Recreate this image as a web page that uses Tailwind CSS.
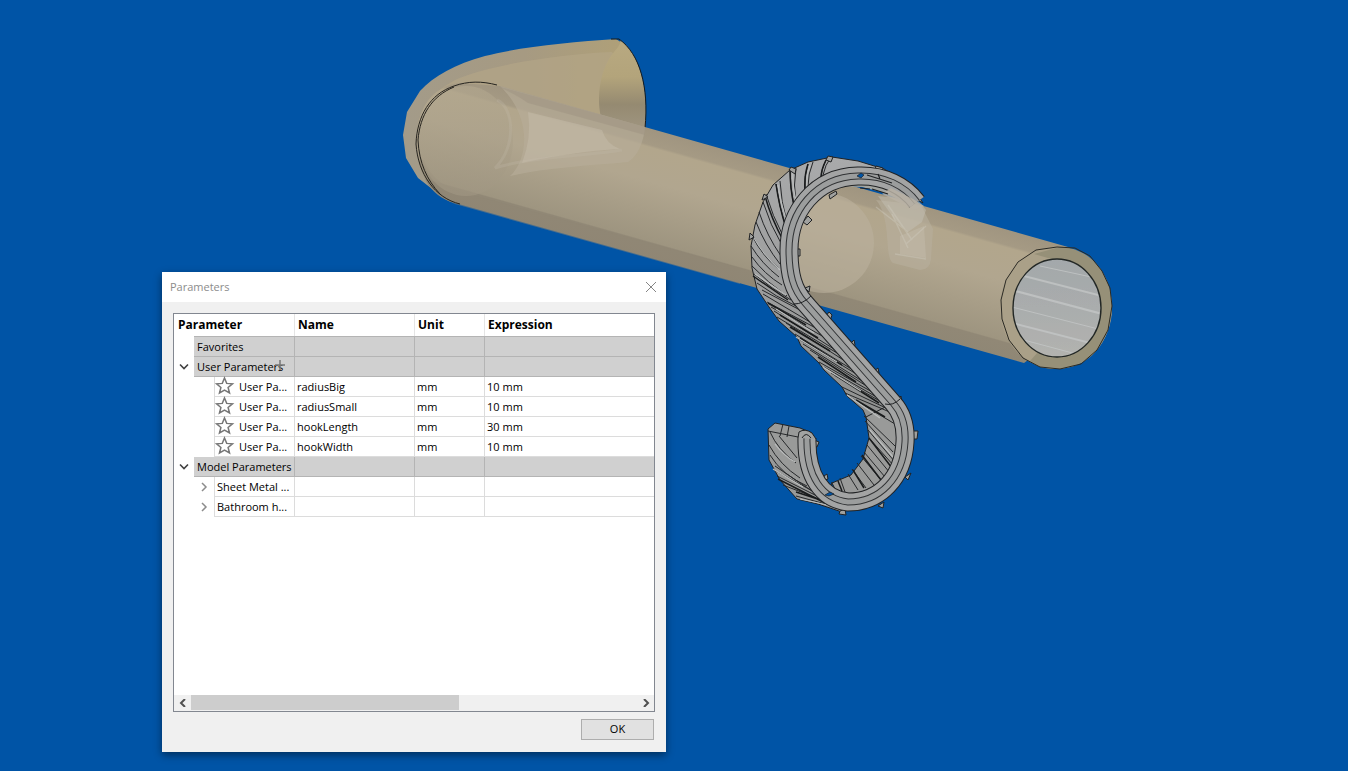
<!DOCTYPE html>
<html lang="en">
<head>
<meta charset="utf-8">
<meta name="viewport" content="width=device-width, initial-scale=1">
<title>Parameters</title>
<script src="https://cdn.jsdelivr.net/npm/@tailwindcss/browser@4"></script>
</head>
<body class="bg-[#0054a6] text-black">
<main class="relative min-h-screen overflow-hidden font-['Open_Sans','Noto_Sans',sans-serif] text-[11px]">
  <!-- 3D viewport: bathroom rail with a ribbed S hook -->
  <svg class="absolute inset-0 h-full w-full" viewBox="0 0 1348 771" preserveAspectRatio="xMinYMin meet" role="img" aria-label="Hook on a rail">
    <defs>
      <linearGradient id="tube" gradientUnits="userSpaceOnUse" x1="760" y1="160" x2="726" y2="281">
        <stop offset="0" stop-color="#a09580"/><stop offset=".12" stop-color="#a59a84"/><stop offset=".14" stop-color="#b2a68c"/><stop offset=".4" stop-color="#b1a68f"/><stop offset=".86" stop-color="#9e9580"/><stop offset=".87" stop-color="#918876"/><stop offset="1" stop-color="#8f8775"/>
      </linearGradient>
      <linearGradient id="elbow" x1="0" y1="0" x2="1" y2="0">
        <stop offset="0" stop-color="#a39b89"/><stop offset=".5" stop-color="#a69a82"/><stop offset="1" stop-color="#b1a176"/>
      </linearGradient>
      <linearGradient id="mouth" x1="0" y1="0" x2="0" y2="1">
        <stop offset="0" stop-color="#b8a981"/><stop offset=".4" stop-color="#b3a47b"/><stop offset=".7" stop-color="#958a71"/><stop offset="1" stop-color="#a09681"/>
      </linearGradient>
      <linearGradient id="bore" x1="0" y1="0" x2="0" y2="1">
        <stop offset="0" stop-color="#a3a8ab"/><stop offset=".5" stop-color="#aaadad"/><stop offset="1" stop-color="#b3b3af"/>
      </linearGradient>
      <linearGradient id="disc" x1="0" y1="0" x2="0" y2="1">
        <stop offset="0" stop-color="#b3a88f"/><stop offset="1" stop-color="#a19783"/>
      </linearGradient>
      <linearGradient id="steel" x1="0" y1="0" x2="0" y2="1">
        <stop offset="0" stop-color="#a9aaab"/><stop offset="1" stop-color="#8f908f"/>
      </linearGradient>
      <clipPath id="boreClip"><ellipse cx="1057" cy="308" rx="44" ry="49"/></clipPath>
    </defs>

    <!-- elbow -->
    <path d="M616 39C570 42 520 47 485 56C455 64 434 76 420 91L407 112L403 135L406 158L418 178L445 199L640 190L645 128C649 85 638 51 616 39Z" fill="url(#elbow)"/>
    <path d="M612 52C560 54 488 65 455 80C430 94 420 108 417 130L470 88L500 92L645 130L630 80Z" fill="#b3a687" opacity=".65"/>
    <path d="M614 52Q622 43 620 40C641 54 648 92 645 128L637 132L602 121C595 97 601 67 614 52Z" fill="url(#mouth)"/>
    <path d="M611 39L619 39C640 54 649 87 645 128" fill="none" stroke="#171b1d"/>

    <!-- straight rail -->
    <path d="M460 83L500 86L1068 247L1110 300L1024 363L455 203C428 196 416 170 417 138C418 105 434 86 460 83Z" fill="url(#tube)"/>
    <path d="M424 160C431 180 447 190 480 197L740 268L740 284L455 204C435 196 423 181 419 160Z" fill="#8f8673" opacity=".5"/>
    <path d="M500 86L645 127C644 142 637 157 628 162C587 166 550 167 510 176C528 160 533 118 500 86Z" fill="#b8ae9a" opacity=".6"/>
    <path d="M528 112L602 130Q606 144 620 149C590 150 548 157 522 163Q532 138 528 112Z" fill="#c3baa8" opacity=".55"/>
    <path d="M497 86L645 127L645 135L528 103Q517 95 497 86Z" fill="#a09684" opacity=".6"/>
    <ellipse cx="466" cy="141" rx="47" ry="55" fill="url(#disc)" opacity=".6"/>
    <path d="M497 100C514 107 517 147 495 168C530 157 585 156 622 150" fill="none" stroke="#c3bbaa" stroke-width="3" opacity=".25"/>
    <path d="M497 85C482 81 468 81 454 86C430 94 417 116 416 144C418 174 435 198 460 204" fill="none" stroke="#26241f"/>
    <path d="M454 87C432 96 420 115 418 140C419 163 427 180 440 194" fill="none" stroke="#26241f"/>

    <!-- open end of the rail -->
    <ellipse cx="1056" cy="308" rx="56" ry="61" fill="#aaa088"/>
    <path d="M1060 247C1093 248 1112 277 1112 306C1111 344 1088 369 1056 369C1045 369 1037 367 1030 361L1038 352C1060 362 1101 350 1101 307C1099 277 1080 260 1055 260L1034 254Z" fill="#969078"/>
    <ellipse cx="1057" cy="308" rx="44" ry="49" fill="url(#bore)"/>
    <g clip-path="url(#boreClip)" stroke="#c3c6c6" stroke-width="2" opacity=".8">
      <path d="M1040 266L1110 281" stroke-width="1"/><path d="M1020 275L1110 298"/><path d="M1008 289L1110 316"/><path d="M1008 306L1110 332" stroke-width="1"/><path d="M1008 322L1110 348"/><path d="M1020 339L1080 355" stroke-width="1"/>
    </g>
    <ellipse cx="1057" cy="308" rx="44" ry="49" fill="none" stroke="#222725" stroke-width="1.4"/>
    <path d="M1057 247L1075 248L1090 256L1102 271L1110 288L1112 306L1108 330L1097 350L1081 364L1060 369L1040 367L1023 358L1009 340L1002 319L1001 300L1006 280L1018 262L1036 250Z" fill="none" stroke="#2c2b25"/>

    <!-- parts seen through the rail -->
    <circle cx="824" cy="243" r="50" fill="#bbb19d" opacity=".6"/>
    <path d="M876 200C892 218 884 258 893 263L920 270Q930 270 931 259L933 229L921 205Z" fill="#b8af9d" opacity=".6"/>
    <path d="M878 196L918 200L926 210L922 222L908 232L895 220Z" fill="#c3bfb4" opacity=".5"/>
    <path d="M900 236L924 226L926 258L900 254Z" fill="#c9c3b5" opacity=".35"/>
    <path d="M876 207L908 232M888 205L912 240M906 244L926 226M895 254L926 259M892 214L908 248" fill="none" stroke="#cdc7ba" stroke-width="1.5" opacity=".45"/>

    <!-- ribbed side faces of the hook -->
    <g stroke="#202224" stroke-linejoin="round" stroke-width="1">
      <path d="M923 203L910 184L884 169L858 161L832 157L808 162L790 170L773 185L763 202L755 225L751 246L752 268L757 289L769 307L779 321L797 337L801 346L819 363L824 370L842 387L847 396L863 410L868 422L900 405L805 300L786 260L800 205L830 180L870 175Z" fill="url(#steel)"/>
      <path d="M866 417L869 438L863 459L851 475L832 483L838 495L875 492L901 470L905 430L895 402Z" fill="#999a99"/>
      <path d="M768 429L775 423L800 428L812 433L806 480L830 499L845 513L818 504L797 499L780 480L769 460Z" fill="#999a99"/>
    </g>
    <path d="M838 186L858 180L890 184L914 198L920 206L900 200L885 193L862 187Z" fill="#a3a49f"/>
    <g fill="none" stroke="#26282a" stroke-width="1">
      <path d="M831 157Q825 165 823 175M826 160Q821 170 821 178M813 162Q808 174 808 186M808 164Q804 176 805 190M796 168Q793 185 796 202M790 169Q790 188 794 206M780 181Q781 202 787 222M776 184Q779 206 786 228M766 194Q772 215 784 238M763 202Q770 225 783 247M759 212Q767 236 781 256M756 222Q765 245 780 264M752 235Q762 255 778 268M751 246Q762 264 779 277M752 257Q764 274 782 285M752 266Q768 283 787 296M754 274Q772 289 791 300M757 283Q776 297 796 306"/>
      <path d="M762 290L800 310M763 294L815 325M767 302L827 334M771 307L831 341M774 311L837 351M777 317L842 356M786 323L848 363M795 334L853 370M797 338L858 375M803 344L862 381M810 350L868 387M819 362L874 393M824 367L880 399M831 373L885 404M842 387L888 409M845 393L892 413M850 397L895 424"/>
      <path d="M864 416L895 446M865 421L893 452M868 430L895 462M869 438L894 466M867 445L890 473M864 452L885 477M861 456L881 480M857 463L874 485M852 469L866 488M848 474L858 490M840 478L845 492M832 482L830 490"/>
      <path d="M770 432Q778 450 796 463M769 445Q780 465 800 478M770 455Q782 475 807 486M775 466L812 491M774 470L818 494M777 476L827 501M783 485L837 506M796 496L844 509M783 424L780 436M789 426L787 437M768 431L798 437L815 440M779 436L797 458"/>
    </g>
    <g fill="none" stroke="#191b1c" stroke-width="1.5">
      <path d="M790 169Q790 188 794 206M808 164Q804 176 805 190M826 160Q821 170 821 178M776 184Q779 206 786 228M765 196Q771 218 784 242M752 235Q762 255 778 268M753 276L788 300M768 303L806 325M780 315L818 338M790 327L830 351M800 338L842 365M818 357L856 382M835 375L879 403M856 400L885 417M869 438L892 468M862 455L881 480M853 470L864 488M838 481L842 491M778 479L827 504M796 492L830 503"/>
    </g>
    <g fill="none" stroke="#bcbebe" stroke-width="1.2">
      <path d="M793 170Q792 186 796 200M810 165Q806 176 807 187M778 185Q781 206 788 224M754 238Q764 256 780 270M755 274L786 295M776 309L814 333M796 337L837 362M823 367L861 391M847 395L880 418M870 430L893 457M775 444Q783 455 795 462M773 469L803 487M800 499L832 506"/>
    </g>

    <!-- nubs along the rim -->
    <g fill="#a0a19f" stroke="#202224">
      <path d="M826 160L828 156L833 157L831 162ZM789 170L791 167L796 169L795 174ZM762 200L764 194L768 197ZM749 240L750 233L754 237ZM875 170L876 166L883 168L882 174ZM907 187L909 183L914 187L914 193ZM803 222L808 216L812 220L807 225ZM797 249L800 249L800 256L797 256ZM805 288L810 286L809 292ZM826 316L829 312L832 315L830 321ZM850 344L854 340L855 345L852 349ZM874 371L878 368L879 373L877 377ZM897 400L901 396L902 402L900 405ZM912 431L918 431L917 439L912 439ZM905 477L911 473L908 480ZM878 506L884 502L883 508ZM840 511L845 509L846 515L839 514ZM814 440L819 442L817 447L813 446ZM824 476L827 474L828 479L825 480ZM829 195L836 191L837 194L830 199Z"/>
    </g>

    <!-- continuous front band, drawn as nested strokes -->
    <g fill="none" stroke-linejoin="round">
      <path d="M917 202C905 186 884 175 858 176C815 177 789 212 789 250C789 274 793 290 805 303L893 403C902 413 906 425 905 442C903 478 880 502 848 502C822 499 806 476 807 438" stroke="#202224" stroke-width="19"/>
      <path d="M917 202C905 186 884 175 858 176C815 177 789 212 789 250C789 274 793 290 805 303L893 403C902 413 906 425 905 442C903 478 880 502 848 502C822 499 806 476 807 438" stroke="#a3a4a4" stroke-width="17"/>
      <path d="M917 202C905 186 884 175 858 176C815 177 789 212 789 250C789 274 793 290 805 303L893 403C902 413 906 425 905 442C903 478 880 502 848 502C822 499 806 476 807 438" stroke="#303234" stroke-width="7"/>
      <path d="M917 202C905 186 884 175 858 176C815 177 789 212 789 250C789 274 793 290 805 303L893 403C902 413 906 425 905 442C903 478 880 502 848 502C822 499 806 476 807 438" stroke="#9b9d9d" stroke-width="5"/>
    </g>
    <path d="M882 194L891 188L913 199L924 206L914 210Z" fill="#b8b2a4" opacity=".85"/>
    <path d="M798 438L799 432Q805 428 812 433L816 439M802 438Q806 431 811 438" fill="#a2a3a2" stroke="#202224"/>
    <path d="M794 304Q803 304 811 296M885 404Q893 406 900 399" fill="none" stroke="#202224"/>
    <path d="M857 176L861 173L864 175L861 178ZM825 495L830 492L834 494L829 496Z" fill="#0054a6" stroke="#202224" stroke-width=".7"/>
    <path d="M860 188L870 189M872 189L888 194M867 175L892 183M878 174L880 179" fill="none" stroke="#202224" stroke-width="1.2"/>
  </svg>

  <!-- Parameters dialog -->
  <section role="dialog" aria-labelledby="dialog-title" class="absolute top-[272px] left-[162px] flex h-[480px] w-[504px] flex-col bg-[#f0f0f0] shadow-[0_3px_8px_rgba(0,0,0,0.45)]">
    <header class="flex h-[30px] shrink-0 items-center justify-between bg-white pr-[7px] pl-2">
      <h1 id="dialog-title" class="text-[11px] text-[#8c8c8c]">Parameters</h1>
      <button type="button" aria-label="Close" class="flex size-4 items-center justify-center">
        <svg class="size-3" viewBox="0 0 12 12" fill="none" stroke="#858585"><path d="M1 1L11 11M11 1L1 11"/></svg>
      </button>
    </header>
    <div class="flex min-h-0 flex-1 flex-col px-[11px] pt-[11px] pb-3">
      <div class="flex min-h-0 flex-1 flex-col border border-[#828790] bg-white">
        <div class="min-h-0 flex-1 overflow-hidden">
          <table class="w-full table-fixed border-separate border-spacing-0 text-left leading-4 whitespace-nowrap">
            <colgroup><col class="w-5"><col class="w-[21px]"><col class="w-20"><col class="w-[120px]"><col class="w-[70px]"><col></colgroup>
            <thead>
              <tr class="h-[22px] text-xs font-bold">
                <th colspan="3" class="border-r border-[#e5e5e5] pl-1">Parameter</th>
                <th class="border-r border-[#e5e5e5] pl-[3px]">Name</th>
                <th class="border-r border-[#e5e5e5] pl-[3px]">Unit</th>
                <th class="pl-[3px]">Expression</th>
              </tr>
            </thead>
            <tbody>
              <tr class="h-[21px]">
                <td></td>
                <td colspan="2" class="border-t border-r border-b border-[#b4b4b4] bg-[#d0d0d0] pl-[3px]">Favorites</td>
                <td class="border-t border-r border-b border-[#b4b4b4] bg-[#d0d0d0]"></td><td class="border-t border-r border-b border-[#b4b4b4] bg-[#d0d0d0]"></td><td class="border-t border-b border-[#b4b4b4] bg-[#d0d0d0]"></td>
              </tr>
              <tr class="h-5">
                <td><button type="button" aria-label="Collapse User Parameters" class="flex h-4 w-full items-center justify-center"><svg class="h-2 w-2.5" viewBox="0 0 10 8" fill="none" stroke="#404040" stroke-width="1.6"><path d="M1 1.5L5 5.5L9 1.5"/></svg></button></td>
                <td colspan="2" class="border-r border-b border-[#b4b4b4] bg-[#d0d0d0] pl-[3px]">
                  <div class="relative">User Parameters<button type="button" aria-label="Add user parameter" class="absolute top-0 right-2 flex h-3 w-3 items-center justify-center"><svg class="size-2.5" viewBox="0 0 10 10" stroke="#777" stroke-width="1.5"><path d="M5 0V10M0 5H10"/></svg></button></div>
                </td>
                <td class="border-r border-b border-[#b4b4b4] bg-[#d0d0d0]"></td><td class="border-r border-b border-[#b4b4b4] bg-[#d0d0d0]"></td><td class="border-b border-[#b4b4b4] bg-[#d0d0d0]"></td>
              </tr>
              <tr class="h-5">
                <td></td><td class="border-r border-[#dcdcdc]"></td>
                <td class="border-r border-b border-[#dcdcdc]"><div class="flex items-center gap-1"><button type="button" aria-label="Favorite radiusBig" class="-mt-1.5 -mb-1 size-5"><svg class="size-5" viewBox="0 0 20 20" fill="none" stroke="#777" stroke-width="1.5"><path d="M9.5 2L11.7 7.4L17.5 7.8L13.1 11.5L14.5 17L9.5 14L4.5 17L5.9 11.5L1.5 7.8L7.3 7.4Z"/></svg></button>User Pa...</div></td>
                <td class="border-r border-b border-[#dcdcdc] pl-0.5">radiusBig</td><td class="border-r border-b border-[#dcdcdc] pl-0.5">mm</td><td class="border-b border-[#dcdcdc] pl-0.5">10 mm</td>
              </tr>
              <tr class="h-5">
                <td></td><td class="border-r border-[#dcdcdc]"></td>
                <td class="border-r border-b border-[#dcdcdc]"><div class="flex items-center gap-1"><button type="button" aria-label="Favorite radiusSmall" class="-mt-1.5 -mb-1 size-5"><svg class="size-5" viewBox="0 0 20 20" fill="none" stroke="#777" stroke-width="1.5"><path d="M9.5 2L11.7 7.4L17.5 7.8L13.1 11.5L14.5 17L9.5 14L4.5 17L5.9 11.5L1.5 7.8L7.3 7.4Z"/></svg></button>User Pa...</div></td>
                <td class="border-r border-b border-[#dcdcdc] pl-0.5">radiusSmall</td><td class="border-r border-b border-[#dcdcdc] pl-0.5">mm</td><td class="border-b border-[#dcdcdc] pl-0.5">10 mm</td>
              </tr>
              <tr class="h-5">
                <td></td><td class="border-r border-[#dcdcdc]"></td>
                <td class="border-r border-b border-[#dcdcdc]"><div class="flex items-center gap-1"><button type="button" aria-label="Favorite hookLength" class="-mt-1.5 -mb-1 size-5"><svg class="size-5" viewBox="0 0 20 20" fill="none" stroke="#777" stroke-width="1.5"><path d="M9.5 2L11.7 7.4L17.5 7.8L13.1 11.5L14.5 17L9.5 14L4.5 17L5.9 11.5L1.5 7.8L7.3 7.4Z"/></svg></button>User Pa...</div></td>
                <td class="border-r border-b border-[#dcdcdc] pl-0.5">hookLength</td><td class="border-r border-b border-[#dcdcdc] pl-0.5">mm</td><td class="border-b border-[#dcdcdc] pl-0.5">30 mm</td>
              </tr>
              <tr class="h-5">
                <td></td><td class="border-r border-[#dcdcdc]"></td>
                <td class="border-r border-b border-[#dcdcdc]"><div class="flex items-center gap-1"><button type="button" aria-label="Favorite hookWidth" class="-mt-1.5 -mb-1 size-5"><svg class="size-5" viewBox="0 0 20 20" fill="none" stroke="#777" stroke-width="1.5"><path d="M9.5 2L11.7 7.4L17.5 7.8L13.1 11.5L14.5 17L9.5 14L4.5 17L5.9 11.5L1.5 7.8L7.3 7.4Z"/></svg></button>User Pa...</div></td>
                <td class="border-r border-b border-[#dcdcdc] pl-0.5">hookWidth</td><td class="border-r border-b border-[#dcdcdc] pl-0.5">mm</td><td class="border-b border-[#dcdcdc] pl-0.5">10 mm</td>
              </tr>
              <tr class="h-5">
                <td><button type="button" aria-label="Collapse Model Parameters" class="flex h-4 w-full items-center justify-center"><svg class="h-2 w-2.5" viewBox="0 0 10 8" fill="none" stroke="#404040" stroke-width="1.6"><path d="M1 1.5L5 5.5L9 1.5"/></svg></button></td>
                <td colspan="2" class="border-r border-b border-[#b4b4b4] bg-[#d0d0d0] pl-[3px]">Model Parameters</td>
                <td class="border-r border-b border-[#b4b4b4] bg-[#d0d0d0]"></td><td class="border-r border-b border-[#b4b4b4] bg-[#d0d0d0]"></td><td class="border-b border-[#b4b4b4] bg-[#d0d0d0]"></td>
              </tr>
              <tr class="h-5">
                <td></td><td class="border-r border-[#dcdcdc]"><button type="button" aria-label="Expand Sheet Metal" class="flex h-4 w-full items-center justify-center"><svg class="h-2.5 w-2" viewBox="0 0 8 10" fill="none" stroke="#8c8c8c" stroke-width="1.5"><path d="M2 1L6 5L2 9"/></svg></button></td>
                <td class="border-r border-b border-[#dcdcdc] pl-0.5">Sheet Metal ...</td><td class="border-r border-b border-[#dcdcdc]"></td><td class="border-r border-b border-[#dcdcdc]"></td><td class="border-b border-[#dcdcdc]"></td>
              </tr>
              <tr class="h-5">
                <td></td><td class="border-r border-[#dcdcdc]"><button type="button" aria-label="Expand Bathroom hook" class="flex h-4 w-full items-center justify-center"><svg class="h-2.5 w-2" viewBox="0 0 8 10" fill="none" stroke="#8c8c8c" stroke-width="1.5"><path d="M2 1L6 5L2 9"/></svg></button></td>
                <td class="border-r border-b border-[#dcdcdc] pl-0.5">Bathroom h...</td><td class="border-r border-b border-[#dcdcdc]"></td><td class="border-r border-b border-[#dcdcdc]"></td><td class="border-b border-[#dcdcdc]"></td>
              </tr>
            </tbody>
          </table>
        </div>
        <div class="flex h-4 shrink-0 bg-[#f0f0f0]">
          <button type="button" aria-label="Scroll left" class="flex w-[17px] items-center justify-center"><svg class="size-2" viewBox="0 0 8 8" fill="none" stroke="#505050" stroke-width="2"><path d="M6 0L2 4L6 8"/></svg></button>
          <div class="flex-1"><div class="h-[15px] w-3/5 bg-[#cdcdcd]"></div></div>
          <button type="button" aria-label="Scroll right" class="flex w-[17px] items-center justify-center"><svg class="size-2" viewBox="0 0 8 8" fill="none" stroke="#505050" stroke-width="2"><path d="M2 0L6 4L2 8"/></svg></button>
        </div>
      </div>
      <footer class="flex justify-end pt-[7px] pr-px">
        <button type="button" class="h-[21px] w-[73px] border border-[#adadad] bg-[#e1e1e1]">OK</button>
      </footer>
    </div>
  </section>
</main>
</body>
</html>
